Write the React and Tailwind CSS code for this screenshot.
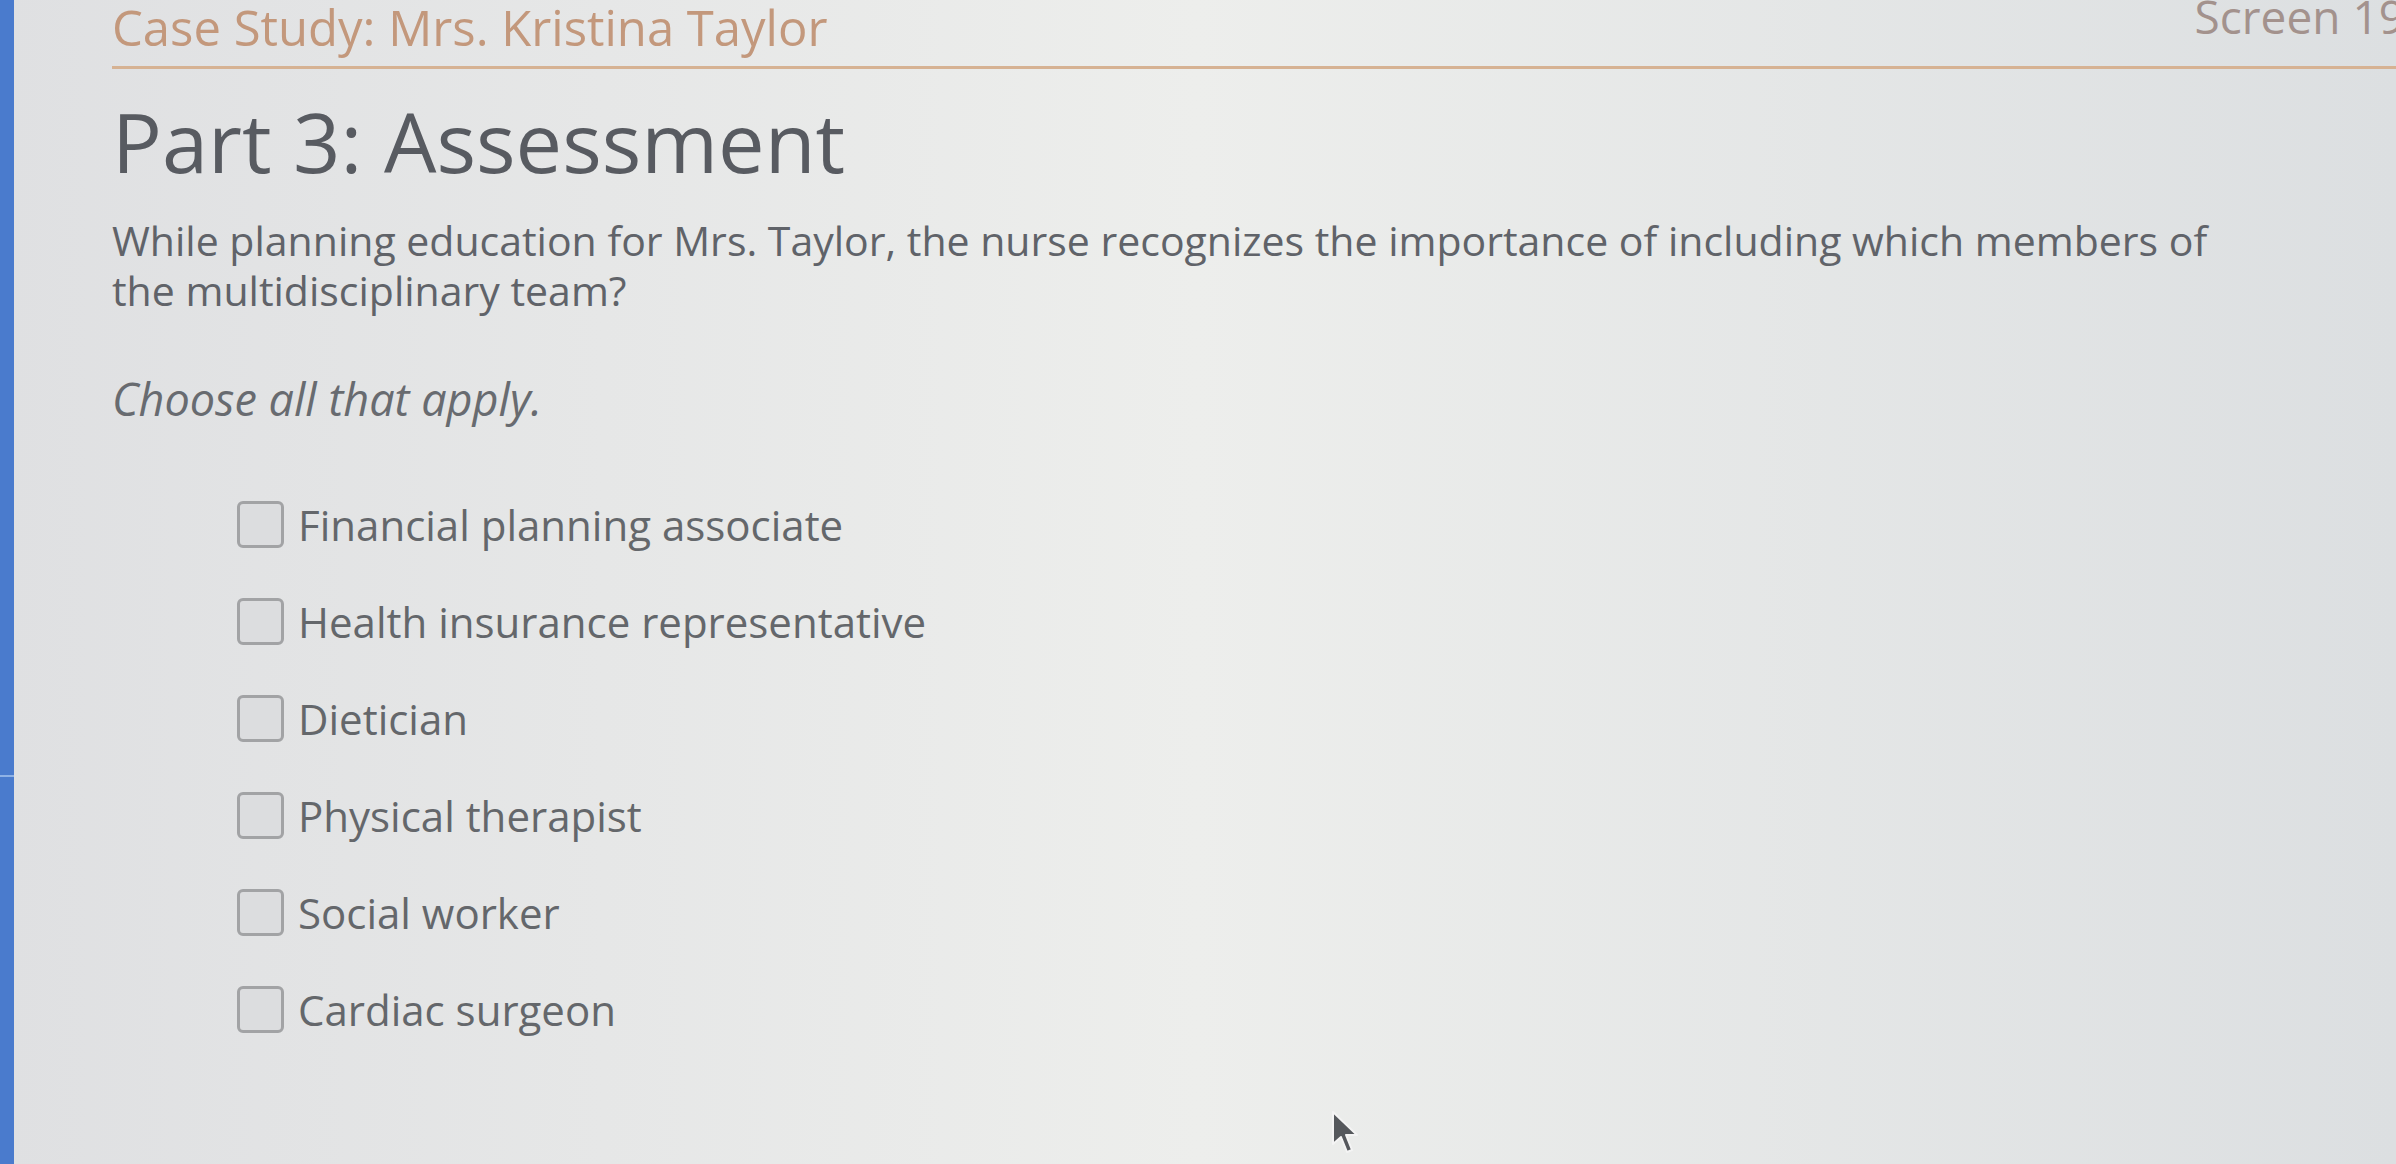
import React from 'react';

const options = [
  'Financial planning associate',
  'Health insurance representative',
  'Dietician',
  'Physical therapist',
  'Social worker',
  'Cardiac surgeon',
];

const font = { fontFamily: '"Open Sans", "Noto Sans", sans-serif' };

const Cursor = () => (
  <svg
    className="absolute left-[1331px] top-[1110px]"
    width="28"
    height="46"
    viewBox="0 0 28 46"
  >
    <path
      d="M2 2 L2 34 L10 27 L16 42 L21 40 L15 25 L26 25 Z"
      fill="#55585c"
      stroke="#f4f4f4"
      strokeWidth="2"
      strokeLinejoin="round"
    />
  </svg>
);

const OptionRow = ({ label }) => (
  <div className="flex items-center h-[97px]">
    <div className="w-[47px] h-[47px] rounded-[6px] border-[3px] border-[#a2a3a5] bg-[#dcdddf] shrink-0"></div>
    <span className="ml-[14px] text-[42px] leading-[50px] text-[#64676b]">{label}</span>
  </div>
);

const App = () => {
  return (
    <div
      className="relative flex w-[2396px] h-[1164px] overflow-hidden bg-gradient-to-r from-[#dfe0e2] via-[#edeeec] to-[#dcdfe1]"
      style={font}
    >
      {/* left blue strip */}
      <div className="w-[14px] h-full flex flex-col shrink-0">
        <div className="h-[775px] bg-[#4a7bcd]"></div>
        <div className="h-[2px] bg-[#8fb2e6]"></div>
        <div className="flex-1 bg-[#4a7bcd]"></div>
      </div>

      <div className="flex-1 min-w-0 pl-[98px] flex flex-col">
        <div className="flex justify-between items-start h-[66px]">
          <h1 className="text-[49px] leading-[54px] text-[#c3987c]">Case Study: Mrs. Kristina Taylor</h1>
          <span className="text-[46px] leading-[32px] text-[#a3928d] mr-[-9px] whitespace-nowrap">Screen 19</span>
        </div>
        <div className="h-[3px] bg-[#d6b293]"></div>

        <h2 className="mt-[22px] text-[83px] leading-[100px] text-[#585b61]">Part 3: Assessment</h2>

        <p className="mt-[24px] max-w-[2150px] text-[41px] leading-[50px] text-[#606369]">
          While planning education for Mrs. Taylor, the nurse recognizes the importance of including which members of the multidisciplinary team?
        </p>

        <p className="mt-[59px] text-[45px] leading-[50px] italic text-[#686b70]">Choose all that apply.</p>

        <div className="mt-[52px] pl-[125px] flex flex-col">
          {options.map(opt => (
            <OptionRow key={opt} label={opt} />
          ))}
        </div>
      </div>

      <Cursor />
    </div>
  );
};

export default App;
